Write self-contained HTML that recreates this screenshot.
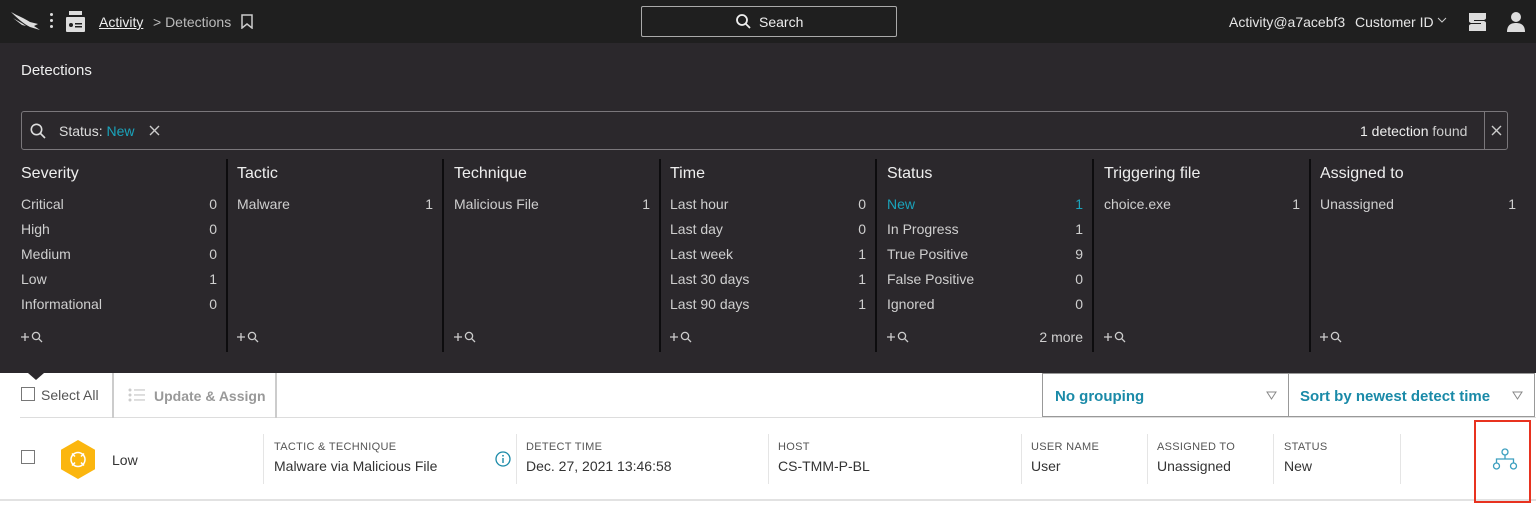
<!DOCTYPE html><html><head><style>
*{box-sizing:border-box;margin:0;padding:0}
body{width:1536px;height:519px;overflow:hidden;background:#fff;font-family:"Liberation Sans",sans-serif;position:relative}
.a{position:absolute;white-space:nowrap}
.top{position:absolute;left:0;top:0;width:1536px;height:43px;background:#1f1f1f;color:#e6e6e6;font-size:14px}
.panel{position:absolute;left:0;top:43px;width:1536px;height:330px;background:#2b282c;color:#ddd}
.col{position:absolute;top:153px;width:217px;height:150px}
.col h3{position:absolute;left:0;top:-31px;font-size:16px;font-weight:normal;color:#eee}
.sep{position:absolute;top:116px;width:2px;height:193px;background:#0d0c0e}
.r{position:absolute;left:0;width:196px;font-size:14px;color:#cfcfcf}
.r span{position:absolute;right:0}
.lbl{font-size:11px;color:#555;letter-spacing:.3px}
.val{font-size:14px;color:#333}
.pl{position:absolute;left:0;top:135px;width:24px;height:14px}
</style></head><body>
<div class="top">
 <svg class="a" style="left:10px;top:10px" width="32" height="22" viewBox="0 0 32 22"><path d="M1 2 C8 6 14 8 20 12 L28 14 L24 16 L30 20 L20 17 C14 14 8 9 1 2Z M3 8 C8 11 12 13 16 16 L12 15 Z" fill="#ddd"/></svg>
 <div class="a" style="left:50px;top:13px;width:3px;height:3px;background:#ddd;border-radius:50%;box-shadow:0 6px #ddd,0 12px #ddd"></div>
 <svg class="a" style="left:65px;top:11px" width="21" height="22" viewBox="0 0 21 22"><rect x="4" y="0" width="13" height="4" fill="#ddd"/><rect x="1" y="6" width="19" height="15" rx="1" fill="#ddd"/><circle cx="6" cy="14" r="2" fill="#1f1f1f"/><rect x="10" y="12" width="7" height="1.5" fill="#1f1f1f"/><rect x="10" y="15" width="7" height="1.5" fill="#1f1f1f"/></svg>
 <div class="a" style="left:99px;top:14px;text-decoration:underline;color:#eee">Activity</div>
 <div class="a" style="left:153px;top:14px;color:#bbb">&gt; Detections</div>
 <svg class="a" style="left:241px;top:14px" width="12" height="15"><path d="M1 1H11V14L6 10L1 14Z" fill="none" stroke="#ccc" stroke-width="1.5"/></svg>
 <div class="a" style="left:641px;top:6px;width:256px;height:31px;border:1px solid #aaa;border-radius:2px"></div>
 <svg class="a" style="left:736px;top:14px" width="15" height="15"><circle cx="6" cy="6" r="5" fill="none" stroke="#eee" stroke-width="1.8"/><path d="M10 10L14 14" stroke="#eee" stroke-width="1.8"/></svg>
 <div class="a" style="left:759px;top:14px;color:#eee">Search</div>
 <div class="a" style="left:1229px;top:14px">Activity@a7acebf3</div>
 <div class="a" style="left:1355px;top:14px">Customer ID</div>
 <svg class="a" style="left:1437px;top:17px" width="10" height="7"><path d="M1 1L5 5L9 1" fill="none" stroke="#ccc"/></svg>
 <svg class="a" style="left:1466px;top:11px" width="22" height="22"><path d="M3 2H20V7C20 8 19 9 17 9H8V10H17C19 10 20 11 20 12V20H3V15C3 14 4 13 6 13H15V12H6C4 12 3 11 3 10Z" fill="#ddd"/></svg>
 <svg class="a" style="left:1505px;top:11px" width="22" height="22"><circle cx="11" cy="6" r="5" fill="#ddd"/><path d="M2 21C2 14 6 12 11 12C16 12 20 14 20 21Z" fill="#ddd"/></svg>
</div>
<div class="panel">
 <div class="a" style="left:21px;top:19px;font-size:15px;color:#eee">Detections</div>
 <div class="a" style="left:21px;top:68px;width:1487px;height:39px;border:1px solid #7a777b;border-radius:3px"></div>
 <div class="a" style="left:1484px;top:68px;width:1px;height:39px;background:#7a777b"></div>
 <svg class="a" style="left:30px;top:80px" width="16" height="16"><circle cx="6.5" cy="6.5" r="5.2" fill="none" stroke="#ddd" stroke-width="1.6"/><path d="M10.5 10.5L15 15" stroke="#ddd" stroke-width="1.6"/></svg>
 <div class="a" style="left:59px;top:80px;font-size:14px;color:#ddd">Status: <span style="color:#1aa3bb">New</span></div>
 <svg class="a" style="left:149px;top:82px" width="11" height="11"><path d="M1 1L10 10M10 1L1 10" stroke="#ccc" stroke-width="1.4"/></svg>
 <div class="a" style="left:1360px;top:80px;font-size:14px;color:#ccc"><span style="color:#eee">1 detection</span> found</div>
 <svg class="a" style="left:1491px;top:82px" width="11" height="11"><path d="M1 1L10 10M10 1L1 10" stroke="#ccc" stroke-width="1.4"/></svg>
 <div class="sep" style="left:226px"></div><div class="sep" style="left:442px"></div><div class="sep" style="left:659px"></div><div class="sep" style="left:875px"></div><div class="sep" style="left:1092px"></div><div class="sep" style="left:1309px"></div>
 <svg width="0" height="0" style="position:absolute"><defs><g id="ps"><path d="M0 6H8M4 2V10" stroke="#ccc" stroke-width="1.3"/><circle cx="15" cy="5" r="3.6" fill="none" stroke="#ccc" stroke-width="1.3"/><path d="M17.6 7.6L21 11" stroke="#ccc" stroke-width="1.3"/></g></defs></svg>
 <div class="col" style="left:21px"><h3>Severity</h3>
  <div class="r" style="top:0">Critical<span>0</span></div><div class="r" style="top:25px">High<span>0</span></div><div class="r" style="top:50px">Medium<span>0</span></div><div class="r" style="top:75px">Low<span>1</span></div><div class="r" style="top:100px">Informational<span>0</span></div><svg class="pl"><use href="#ps"/></svg></div>
 <div class="col" style="left:237px"><h3>Tactic</h3><div class="r" style="top:0">Malware<span>1</span></div><svg class="pl"><use href="#ps"/></svg></div>
 <div class="col" style="left:454px"><h3>Technique</h3><div class="r" style="top:0">Malicious File<span>1</span></div><svg class="pl"><use href="#ps"/></svg></div>
 <div class="col" style="left:670px"><h3>Time</h3>
  <div class="r" style="top:0">Last hour<span>0</span></div><div class="r" style="top:25px">Last day<span>0</span></div><div class="r" style="top:50px">Last week<span>1</span></div><div class="r" style="top:75px">Last 30 days<span>1</span></div><div class="r" style="top:100px">Last 90 days<span>1</span></div><svg class="pl"><use href="#ps"/></svg></div>
 <div class="col" style="left:887px"><h3>Status</h3>
  <div class="r" style="top:0;color:#1aa3bb">New<span>1</span></div><div class="r" style="top:25px">In Progress<span>1</span></div><div class="r" style="top:50px">True Positive<span>9</span></div><div class="r" style="top:75px">False Positive<span>0</span></div><div class="r" style="top:100px">Ignored<span>0</span></div><div class="r" style="top:133px"><span>2 more</span></div><svg class="pl"><use href="#ps"/></svg></div>
 <div class="col" style="left:1104px"><h3>Triggering file</h3><div class="r" style="top:0">choice.exe<span>1</span></div><svg class="pl"><use href="#ps"/></svg></div>
 <div class="col" style="left:1320px"><h3>Assigned to</h3><div class="r" style="top:0">Unassigned<span>1</span></div><svg class="pl"><use href="#ps"/></svg></div>
</div>
<div class="a" style="left:20px;top:373px;width:1516px;height:45px;border-bottom:1px solid #ddd"></div>
<div class="a" style="left:112px;top:373px;width:2px;height:45px;background:#ccc"></div>
<div class="a" style="left:275px;top:373px;width:2px;height:45px;background:#ccc"></div>
<div class="a" style="left:28px;top:373px;width:0;height:0;border-left:8px solid transparent;border-right:8px solid transparent;border-top:7px solid #2b282c"></div>
<div class="a" style="left:21px;top:387px;width:14px;height:14px;border:1px solid #777"></div>
<div class="a" style="left:41px;top:387px;font-size:14px;color:#555">Select All</div>
<svg class="a" style="left:128px;top:388px" width="18" height="14"><g fill="#ccc"><circle cx="2" cy="2" r="1.5"/><circle cx="2" cy="7" r="1.5"/><circle cx="2" cy="12" r="1.5"/><rect x="6" y="1.3" width="11" height="1.3"/><rect x="6" y="6.3" width="11" height="1.3"/><rect x="6" y="11.3" width="11" height="1.3"/></g></svg>
<div class="a" style="left:154px;top:388px;font-size:14px;font-weight:bold;color:#999">Update &amp; Assign</div>
<div class="a" style="left:1042px;top:373px;width:247px;height:44px;border:1px solid #999"></div>
<div class="a" style="left:1288px;top:373px;width:247px;height:44px;border:1px solid #999"></div>
<div class="a" style="left:1055px;top:388px;font-size:15px;font-weight:bold;color:#1a8aa8">No grouping</div>
<div class="a" style="left:1300px;top:388px;font-size:15px;font-weight:bold;color:#1a8aa8">Sort by newest detect time</div>
<svg class="a" style="left:1266px;top:391px" width="11" height="9"><path d="M1 1H10L5.5 8Z" fill="none" stroke="#888"/></svg>
<svg class="a" style="left:1512px;top:391px" width="11" height="9"><path d="M1 1H10L5.5 8Z" fill="none" stroke="#888"/></svg>
<div class="a" style="left:0;top:499px;width:1536px;height:2px;background:#e2e2e2"></div>
<div class="a" style="left:21px;top:450px;width:14px;height:14px;border:1px solid #777"></div>
<svg class="a" style="left:61px;top:440px" width="34" height="39" viewBox="0 0 34 39"><path d="M17 0L34 9.75V29.25L17 39L0 29.25V9.75Z" fill="#fbb60f"/><circle cx="17" cy="19.5" r="7" fill="none" stroke="#fff" stroke-width="1.5"/><path d="M11 13.5L14 16.5M23 13.5L20 16.5M11 25.5L14 22.5M23 25.5L20 22.5" stroke="#fff" stroke-width="1.5"/></svg>
<div class="a val" style="left:112px;top:452px">Low</div>
<div class="a" style="left:263px;top:434px;width:1px;height:50px;background:#e5e5e5"></div>
<div class="a" style="left:516px;top:434px;width:1px;height:50px;background:#e5e5e5"></div>
<div class="a" style="left:768px;top:434px;width:1px;height:50px;background:#e5e5e5"></div>
<div class="a" style="left:1021px;top:434px;width:1px;height:50px;background:#e5e5e5"></div>
<div class="a" style="left:1147px;top:434px;width:1px;height:50px;background:#e5e5e5"></div>
<div class="a" style="left:1273px;top:434px;width:1px;height:50px;background:#e5e5e5"></div>
<div class="a" style="left:1400px;top:434px;width:1px;height:50px;background:#e5e5e5"></div>
<div class="a lbl" style="left:274px;top:441px">TACTIC &amp; TECHNIQUE</div><div class="a val" style="left:274px;top:458px">Malware via Malicious File</div>
<svg class="a" style="left:495px;top:451px" width="16" height="16"><circle cx="8" cy="8" r="7" fill="none" stroke="#1a8aa8" stroke-width="1.3"/><rect x="7.3" y="7" width="1.4" height="5" fill="#1a8aa8"/><circle cx="8" cy="4.8" r="0.9" fill="#1a8aa8"/></svg>
<div class="a lbl" style="left:526px;top:441px">DETECT TIME</div><div class="a val" style="left:526px;top:458px">Dec. 27, 2021 13:46:58</div>
<div class="a lbl" style="left:778px;top:441px">HOST</div><div class="a val" style="left:778px;top:458px">CS-TMM-P-BL</div>
<div class="a lbl" style="left:1031px;top:441px">USER NAME</div><div class="a val" style="left:1031px;top:458px">User</div>
<div class="a lbl" style="left:1157px;top:441px">ASSIGNED TO</div><div class="a val" style="left:1157px;top:458px">Unassigned</div>
<div class="a lbl" style="left:1284px;top:441px">STATUS</div><div class="a val" style="left:1284px;top:458px">New</div>
<div class="a" style="left:1474px;top:420px;width:57px;height:83px;border:2px solid #e8321f"></div>
<svg class="a" style="left:1492px;top:448px" width="26" height="24" viewBox="0 0 26 24"><g fill="none" stroke="#3c9fbf" stroke-width="1.3"><circle cx="13" cy="4" r="3"/><circle cx="4.5" cy="18" r="3"/><circle cx="21.5" cy="18" r="3"/><path d="M13 7V11M4.5 15V11H21.5V15"/></g></svg>
</body></html>
